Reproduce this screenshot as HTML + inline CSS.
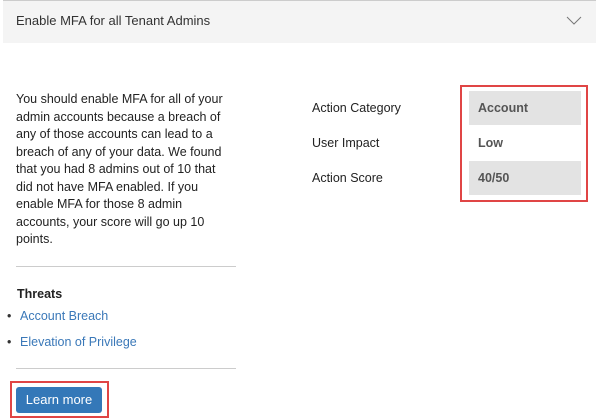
<!DOCTYPE html>
<html><head><style>
body{margin:0;width:600px;height:418px;background:#fff;font-family:"Liberation Sans",sans-serif;position:relative;overflow:hidden;color:#222}
.a{position:absolute}
</style></head><body>
<div class="a" style="left:3px;top:0;width:593px;height:42px;background:#f4f4f4;border-top:1px solid #ccc"></div>
<div class="a" style="left:16px;top:13px;font-size:13px;color:#333">Enable MFA for all Tenant Admins</div>
<svg class="a" style="left:566px;top:16px" width="16" height="10"><path d="M1 1 L8 8 L15 1" fill="none" stroke="#777" stroke-width="1"/></svg>
<div class="a" style="left:16px;top:91px;width:214px;font-size:12.5px;line-height:17.5px;color:#222">You should enable MFA for all of your admin accounts because a breach of any of those accounts can lead to a breach of any of your data. We found that you had 8 admins out of 10 that did not have MFA enabled. If you enable MFA for those 8 admin accounts, your score will go up 10 points.</div>
<div class="a" style="left:16px;top:266px;width:220px;height:1px;background:#ccc"></div>
<div class="a" style="left:17px;top:287px;font-size:12.5px;font-weight:bold">Threats</div>
<div class="a" style="left:7px;top:309px;font-size:12.5px;color:#3a78b8"><span style="color:#333;display:inline-block;width:13px">•</span>Account Breach</div>
<div class="a" style="left:7px;top:335px;font-size:12.5px;color:#3a78b8"><span style="color:#333;display:inline-block;width:13px">•</span>Elevation of Privilege</div>
<div class="a" style="left:16px;top:368px;width:220px;height:1px;background:#ccc"></div>
<div class="a" style="left:10px;top:381px;width:95px;height:33px;border:2px solid #e04545"></div>
<div class="a" style="left:16px;top:387px;width:86px;height:26px;background:#3478b8;border-radius:3px;color:#fff;font-size:13px;line-height:26px;text-align:center">Learn more</div>
<div class="a" style="left:312px;top:101px;font-size:12.5px">Action Category</div>
<div class="a" style="left:312px;top:136px;font-size:12.5px">User Impact</div>
<div class="a" style="left:312px;top:171px;font-size:12.5px">Action Score</div>
<div class="a" style="left:460px;top:85px;width:124px;height:113px;border:2px solid #e04545"></div>
<div class="a" style="left:469px;top:91px;width:112px;height:34px;background:#e3e3e3"></div>
<div class="a" style="left:469px;top:161px;width:112px;height:34px;background:#e3e3e3"></div>
<div class="a" style="left:478px;top:101px;font-size:12.5px;font-weight:bold;color:#555">Account</div>
<div class="a" style="left:478px;top:136px;font-size:12.5px;font-weight:bold;color:#555">Low</div>
<div class="a" style="left:478px;top:171px;font-size:12.5px;font-weight:bold;color:#555">40/50</div>
</body></html>
